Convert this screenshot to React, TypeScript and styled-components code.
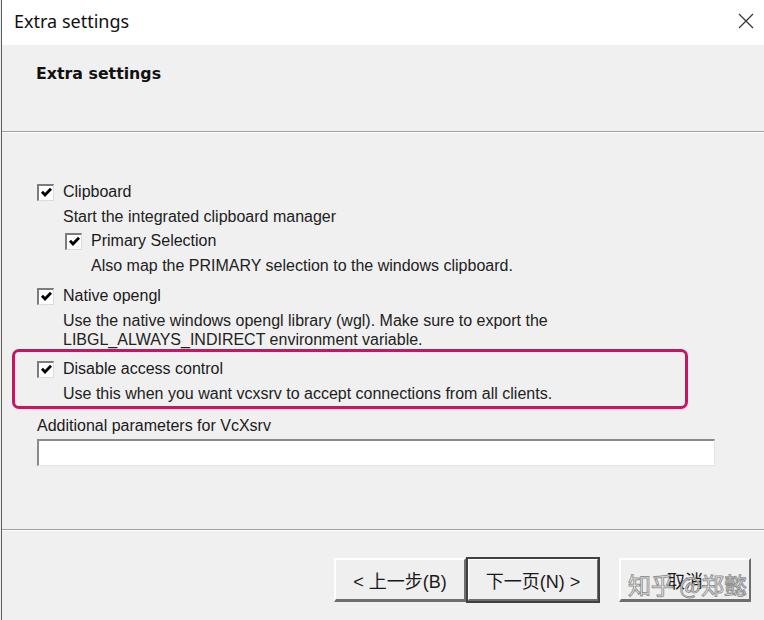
import React from "react";
import styled, { createGlobalStyle } from "styled-components";

const Global = createGlobalStyle`
  html, body { margin: 0; padding: 0; background: #f0f0f0; }
  body { width: 764px; height: 620px; overflow: hidden; }
`;

const Window = styled.div`
  position: relative;
  width: 763px;
  height: 620px;
  margin-left: 1px;
  border-left: 1px solid #5a5a5a;
  box-sizing: border-box;
  background: #f0f0f0;
  display: flex;
  flex-direction: column;
  font-family: "Liberation Sans", Arial, sans-serif;
  color: #1a1a1a;
`;

const TitleBar = styled.div`
  height: 45px;
  background: #ffffff;
  display: flex;
  align-items: center;
  justify-content: space-between;
  padding: 0 6px 4px 12px;
  box-sizing: border-box;
  flex-shrink: 0;
`;

const TitleText = styled.span`
  font-family: "Noto Sans", "Open Sans", sans-serif;
  font-size: 18px;
  color: #111;
`;

const CloseButton = styled.div`
  width: 24px;
  height: 24px;
  display: flex;
  align-items: center;
  justify-content: center;
`;

const Header = styled.div`
  height: 87px;
  padding: 19px 0 0 34px;
  box-sizing: border-box;
  border-bottom: 1px solid #a0a0a0;
  box-shadow: 0 1px 0 #ffffff;
  flex-shrink: 0;
`;

const HeaderTitle = styled.h1`
  margin: 0;
  font-family: "DejaVu Sans", Verdana, sans-serif;
  font-weight: bold;
  font-size: 15.8px;
  color: #111;
`;

const Body = styled.div`
  flex: 1;
  padding: 50px 48px 0 35px;
  display: flex;
  flex-direction: column;
  font-size: 16px;
  border-bottom: 1px solid #a0a0a0;
  box-shadow: 0 1px 0 #ffffff;
`;

const Option = styled.div<{ $gap?: number }>`
  position: relative;
  display: flex;
  flex-direction: column;
  margin-top: ${(p) => p.$gap ?? 0}px;
`;

const CheckRow = styled.label`
  display: flex;
  align-items: center;
  gap: 9px;
  height: 20px;
  line-height: 20px;
`;

const Description = styled.div<{ $indent: number }>`
  margin-top: 5px;
  padding-left: ${(p) => p.$indent}px;
  line-height: 19px;
  color: #222;
`;

const Nested = styled.div`
  padding-left: 28px;
  margin-top: 5px;
`;

const Box = styled.span`
  width: 17px;
  height: 17px;
  box-sizing: border-box;
  border-top: 2px solid #7c7c7c;
  border-left: 2px solid #7c7c7c;
  border-right: 1px solid #dcdcdc;
  border-bottom: 1px solid #dcdcdc;
  background: #ffffff;
  display: flex;
  align-items: center;
  justify-content: center;
  flex-shrink: 0;
`;

const Highlight = styled.div`
  position: absolute;
  left: -25px;
  top: -10px;
  width: 676px;
  height: 60px;
  border: 3px solid #c8155f;
  border-radius: 7px;
  box-sizing: border-box;
  pointer-events: none;
`;

const FieldLabel = styled.div`
  margin-top: 13px;
  line-height: 19px;
`;

const TextField = styled.div`
  margin-top: 4px;
  width: 678px;
  height: 27px;
  box-sizing: border-box;
  background: #ffffff;
  border-top: 2px solid #8a8a8a;
  border-left: 2px solid #8a8a8a;
  border-right: 1px solid #e4e4e4;
  border-bottom: 1px solid #e4e4e4;
`;

const Footer = styled.div`
  height: 90px;
  flex-shrink: 0;
  display: flex;
  align-items: flex-start;
  justify-content: flex-end;
  padding: 28px 13px 0 0;
  box-sizing: border-box;
`;

const ButtonPair = styled.div`
  display: flex;
  margin-right: 20px;
`;

const Button = styled.button<{ $primary?: boolean }>`
  width: 132px;
  height: 44px;
  font-family: "Liberation Sans", "Noto Sans CJK SC", sans-serif;
  font-size: 18px;
  color: #1a1a1a;
  background: #efefef;
  box-sizing: border-box;
  padding: 0;
  border-top: 2px solid #ffffff;
  border-left: 2px solid #ffffff;
  border-right: 2px solid #6e6e6e;
  border-bottom: 3px solid #6e6e6e;
  outline: ${(p) => (p.$primary ? "2px solid #404040" : "none")};
  outline-offset: -1px;
  margin-left: ${(p) => (p.$primary ? "1px" : "0")};
`;

const Watermark = styled.div`
  position: absolute;
  right: 17px;
  bottom: 19px;
  font-family: "Noto Sans CJK SC", sans-serif;
  font-size: 23px;
  color: rgba(255, 255, 255, 0.9);
  -webkit-text-stroke: 1px rgba(120, 120, 120, 0.8);
  pointer-events: none;
`;

const Check = () => (
  <svg width="13" height="13" viewBox="0 0 13 13">
    <path d="M2 5.8 L5 9 L11 2.8" fill="none" stroke="#000" strokeWidth="2.8" />
  </svg>
);

const CheckOption = ({ label }: { label: string }) => (
  <CheckRow>
    <Box>
      <Check />
    </Box>
    <span>{label}</span>
  </CheckRow>
);

export default function App() {
  return (
    <>
      <Global />
      <Window>
        <TitleBar>
          <TitleText>Extra settings</TitleText>
          <CloseButton>
            <svg width="16" height="16" viewBox="0 0 16 16">
              <path d="M1 1 L15 15 M15 1 L1 15" stroke="#333" strokeWidth="1.2" />
            </svg>
          </CloseButton>
        </TitleBar>
        <Header>
          <HeaderTitle>Extra settings</HeaderTitle>
        </Header>
        <Body>
          <Option>
            <CheckOption label="Clipboard" />
            <Description $indent={26}>Start the integrated clipboard manager</Description>
            <Nested>
              <CheckOption label="Primary Selection" />
              <Description $indent={26}>
                Also map the PRIMARY selection to the windows clipboard.
              </Description>
            </Nested>
          </Option>
          <Option $gap={11}>
            <CheckOption label="Native opengl" />
            <Description $indent={26}>
              Use the native windows opengl library (wgl). Make sure to export the
              <br />
              LIBGL_ALWAYS_INDIRECT environment variable.
            </Description>
          </Option>
          <Option $gap={10}>
            <Highlight />
            <CheckOption label="Disable access control" />
            <Description $indent={26}>
              Use this when you want vcxsrv to accept connections from all clients.
            </Description>
          </Option>
          <FieldLabel>Additional parameters for VcXsrv</FieldLabel>
          <TextField />
        </Body>
        <Footer>
          <ButtonPair>
            <Button>&lt; 上一步(B)</Button>
            <Button $primary>下一页(N) &gt;</Button>
          </ButtonPair>
          <Button>取消</Button>
        </Footer>
        <Watermark>知乎 @郑懿</Watermark>
      </Window>
    </>
  );
}
